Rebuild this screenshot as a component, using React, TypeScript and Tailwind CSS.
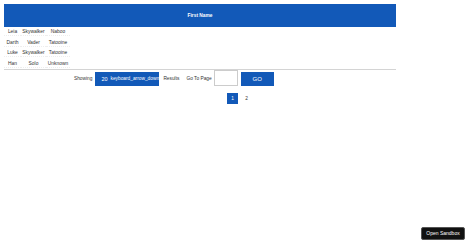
import React from "react";

const rows = [
  ["Leia", "Skywalker", "Naboo"],
  ["Darth", "Vader", "Tatooine"],
  ["Luke", "Skywalker", "Tatooine"],
  ["Han", "Solo", "Unknown"],
];

export default function App() {
  return (
    <div
      className="relative w-[474px] h-[248px] bg-white text-[#222] overflow-hidden"
      style={{ fontFamily: '"Liberation Sans", Arial, sans-serif' }}
    >
      <div className="pt-[4px] pl-[4px] w-[396px]">
        <div className="h-[23px] bg-[#1259b8] text-white font-bold text-[4.8px] flex items-center justify-center">
          First Name
        </div>
        <div className="flex flex-col w-[66px]">
          {rows.map((r, i) => (
            <div key={i} className="flex h-[10.5px] items-center text-[4.9px] text-[#333]">
              <div className="w-[17px] text-center border-b border-dotted border-[#eee]">{r[0]}</div>
              <div className="w-[25px] text-center border-b border-dotted border-[#eee]">{r[1]}</div>
              <div className="w-[24px] text-center border-b border-dotted border-[#eee]">{r[2]}</div>
            </div>
          ))}
        </div>
        <div className="h-px bg-[#d4d4d4]" />
        <div className="flex items-center h-[18px] pl-[70px] text-[4.8px] text-[#333]">
          <span>Showing</span>
          <div className="ml-[3px] h-[14px] w-[64px] bg-[#1259b8] text-white flex items-center pl-[6px] gap-[3px]">
            <span className="text-[5.5px]">20</span>
            <span>keyboard_arrow_down</span>
          </div>
          <span className="ml-[4px]">Results</span>
          <span className="ml-[7px]">Go To Page</span>
          <div className="ml-[2px] self-start h-[16px] w-[24px] border border-[#ccc] bg-white" />
          <div className="ml-[3px] h-[14px] w-[33px] bg-[#1259b8] text-white text-[6px] flex items-center justify-center">
            GO
          </div>
        </div>
        <div className="flex items-center pl-[223px] mt-[5px] text-[4.8px]">
          <div className="w-[11px] h-[11px] bg-[#1259b8] text-white flex items-center justify-center">1</div>
          <div className="ml-[3px] w-[11px] h-[11px] flex items-center justify-center text-[#333]">2</div>
        </div>
      </div>
      <div className="absolute left-[421px] top-[227px] w-[44px] h-[13px] bg-[#111] rounded-[2px] text-white text-[5px] flex items-center justify-center border border-[#555]">
        Open Sandbox
      </div>
    </div>
  );
}
